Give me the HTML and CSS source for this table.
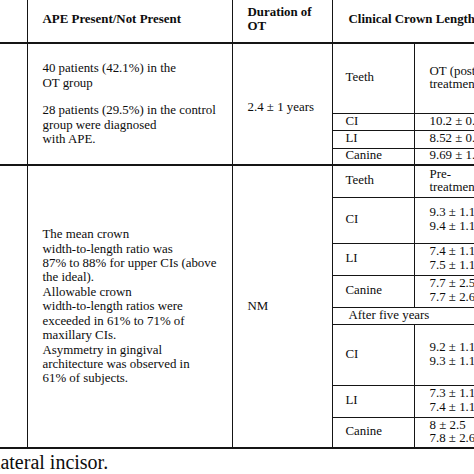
FILE: index.html
```html
<!DOCTYPE html>
<html lang="en">
<head>
<meta charset="utf-8">
<title>Table</title>
<link rel="stylesheet" href="styles.css">
</head>
<body>
<div class="page">
<table class="grid">
<colgroup><col class="c0"><col class="c1"><col class="c2"><col class="c3"><col class="c4"></colgroup>
<thead>
<tr class="r-head">
<th class="first"></th>
<th class="hd">APE Present/Not Present</th>
<th class="hd">Duration of<br>OT</th>
<th class="hd wide" colspan="2">Clinical Crown Length</th>
</tr>
</thead>
<tbody>
<tr class="r-teeth1">
<td class="first" rowspan="4"></td>
<td class="txt" rowspan="4"><p>40 patients (42.1%) in the<br>OT group</p><p>28 patients (29.5%) in the control<br>group were diagnosed<br>with APE.</p></td>
<td class="txt low" rowspan="4">2.4 ± 1 years</td>
<td class="sub">Teeth</td>
<td class="val">OT (post-<br>treatment)</td>
</tr>
<tr class="r-single"><td class="sub">CI</td><td class="val">10.2 ± 0.8</td></tr>
<tr class="r-single"><td class="sub">LI</td><td class="val">8.52 ± 0.7</td></tr>
<tr class="r-single2"><td class="sub">Canine</td><td class="val">9.69 ± 1.0</td></tr>
</tbody>
<tbody>
<tr class="r-double">
<td class="first" rowspan="8"></td>
<td class="txt" rowspan="8">The mean crown<br>width-to-length ratio was<br>87% to 88% for upper CIs (above<br>the ideal).<br>Allowable crown<br>width-to-length ratios were<br>exceeded in 61% to 71% of<br>maxillary CIs.<br>Asymmetry in gingival<br>architecture was observed in<br>61% of subjects.</td>
<td class="txt" rowspan="8">NM</td>
<td class="sub">Teeth</td>
<td class="val">Pre-<br>treatment</td>
</tr>
<tr class="r-ci1"><td class="sub">CI</td><td class="val">9.3 ± 1.1<br>9.4 ± 1.1</td></tr>
<tr class="r-double"><td class="sub">LI</td><td class="val">7.4 ± 1.1<br>7.5 ± 1.1</td></tr>
<tr class="r-double"><td class="sub">Canine</td><td class="val">7.7 ± 2.5<br>7.7 ± 2.6</td></tr>
<tr class="r-single2"><td class="sub span" colspan="2">After five years</td></tr>
<tr class="r-ci2"><td class="sub">CI</td><td class="val">9.2 ± 1.1<br>9.3 ± 1.1</td></tr>
<tr class="r-double"><td class="sub">LI</td><td class="val">7.3 ± 1.1<br>7.4 ± 1.1</td></tr>
<tr class="r-last"><td class="sub">Canine</td><td class="val">8 ± 2.5<br>7.8 ± 2.6</td></tr>
</tbody>
</table>
<p class="note">LI, lateral incisor.</p>
</div>
</body>
</html>
```

FILE: styles.css
```css
html, body {
  margin: 0;
  padding: 0;
  overflow: hidden;
  background: #ffffff;
}
body {
  width: 474px;
  height: 474px;
  font-family: "Liberation Serif", "Times New Roman", serif;
  color: #0d0d0d;
}
.page {
  width: 474px;
  height: 474px;
  overflow: hidden;
}
.grid {
  border-collapse: collapse;
  table-layout: fixed;
  width: 600px;
  font-size: 12.9px;
}
.c0 { width: 27px; }
.c1 { width: 205px; }
.c2 { width: 100px; }
.c3 { width: 82px; }
.c4 { width: 186px; }

.grid th, .grid td {
  border: 1px solid #151515;
  padding: 0;
  vertical-align: middle;
  text-align: left;
  white-space: nowrap;
  overflow: hidden;
}
.grid .first { border-left: none; }
.grid thead tr { border-bottom: 2px solid #151515; }
.grid thead th { border-top: none; }
.grid tbody { border-bottom: 2px solid #151515; }

.r-head { height: 43px; }
.grid .hd {
  font-weight: bold;
  line-height: 13.4px;
  padding: 0 15px 3px 15px;
}
.grid .hd.wide { padding-left: 16px; }

.grid .txt {
  line-height: 14.4px;
  padding: 0 15px;
}
.grid .txt.low { padding-top: 6px; }
.txt p { margin: 0; }
.txt p + p { margin-top: 13px; }

.grid .sub {
  line-height: 13.6px;
  padding: 0 13px;
}
.grid .val {
  line-height: 13.6px;
  padding: 0 15px;
}
.grid .sub.span { padding-left: 16px; }

.r-teeth1 { height: 70px; }
.r-single { height: 17.5px; }
.r-single2 { height: 17px; }
.r-double { height: 32px; }
.r-ci1 { height: 46px; }
.r-ci2 { height: 61px; }
.r-last { height: 31px; }

.note {
  margin: 2px 0 0 -34px;
  font-size: 20px;
  line-height: 23px;
  white-space: nowrap;
}
```
